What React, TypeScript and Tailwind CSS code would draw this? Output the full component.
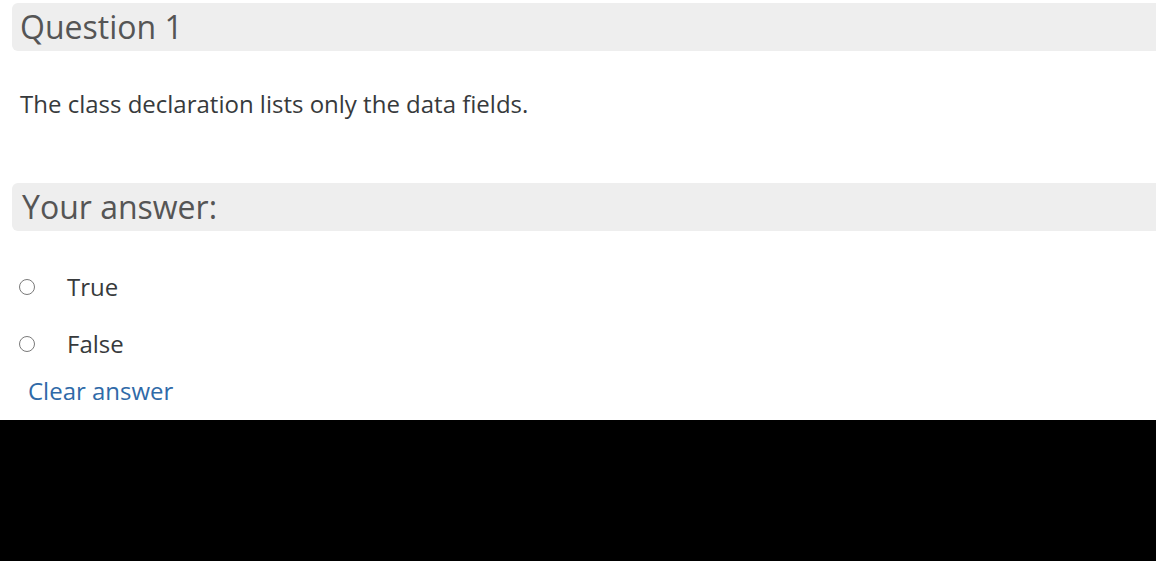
import { useState } from 'react';

const options = ['True', 'False'];

export default function App() {
  const [selected, setSelected] = useState<string | null>(null);

  return (
    <div className="h-[561px] w-[1156px] bg-black font-['Open_Sans',sans-serif]">
      <div className="h-[420px] bg-white pl-3 pt-[3px]">
        <div className="flex h-[48px] items-center rounded-l-md bg-[#eeeeee] pl-2 text-[32px] text-[#555]">
          Question 1
        </div>

        <p className="mt-[37px] pl-2 text-[24px] leading-[32px] text-[#373a3c]">
          The class declaration lists only the data fields.
        </p>

        <div className="mt-[63px] flex h-[48px] items-center rounded-l-md bg-[#eeeeee] pl-[10px] text-[32px] text-[#555]">
          Your answer:
        </div>

        <div className="mt-[45px] space-y-[35px]">
          {options.map((opt) => (
            <label key={opt} className="flex h-[22px] cursor-pointer items-center text-[24px] text-[#373a3c]">
              <span className="ml-[7px] flex h-4 w-4 items-center justify-center rounded-full border-[1.5px] border-[#7a7a7a] bg-white">
                {selected === opt && <span className="h-2 w-2 rounded-full bg-[#0075ff]" />}
              </span>
              <input
                type="radio"
                name="answer"
                className="hidden"
                checked={selected === opt}
                onChange={() => setSelected(opt)}
              />
              <span className="ml-[32px]">{opt}</span>
            </label>
          ))}
        </div>

        <button
          className="mt-[20px] ml-4 block text-[24px] leading-[32px] text-[#2f6aa8] hover:underline"
          onClick={() => setSelected(null)}
        >
          Clear answer
        </button>
      </div>
    </div>
  );
}
